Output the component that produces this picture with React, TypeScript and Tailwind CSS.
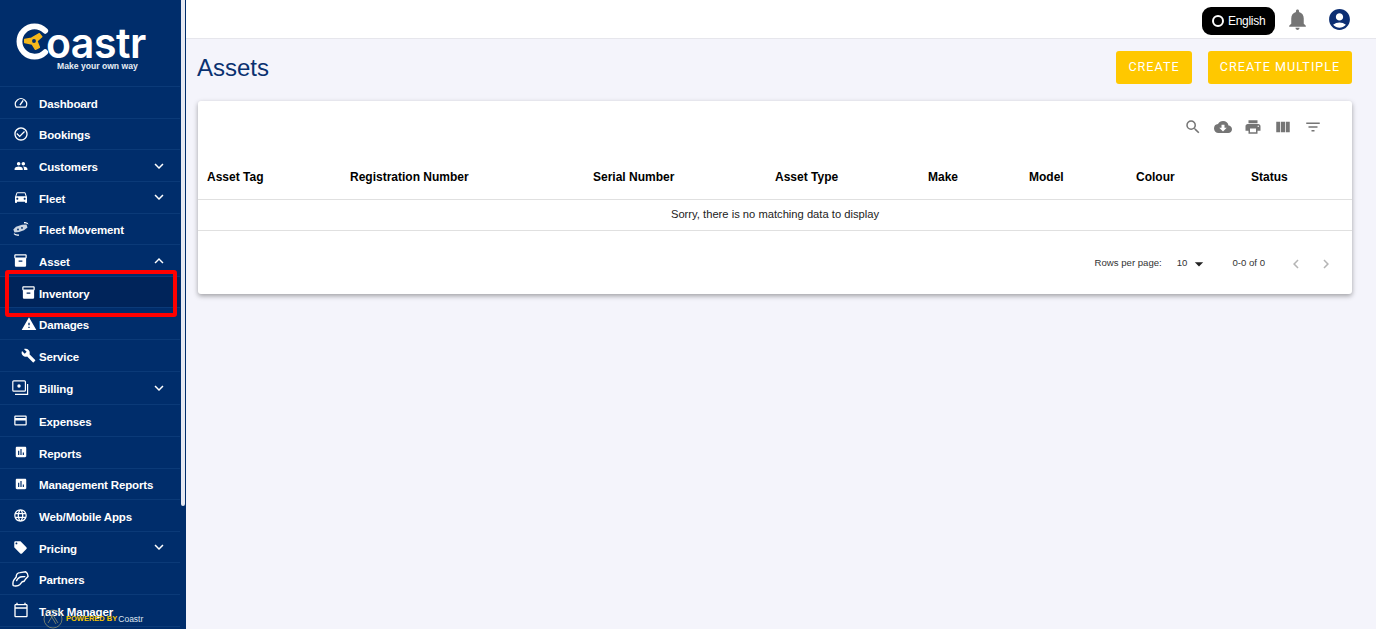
import type { ReactNode } from "react";
import {
  MdAssessment,
  MdBuild,
  MdCheckCircleOutline,
  MdCreditCard,
  MdDirectionsCar,
  MdFilterList,
  MdInventory2,
  MdKeyboardArrowDown,
  MdKeyboardArrowUp,
  MdLanguage,
  MdLocalOffer,
  MdNotifications,
  MdOutlineCalendarToday,
  MdAccountCircle,
  MdCloudDownload,
  MdPrint,
  MdSearch,
  MdViewColumn,
  MdWarning,
  MdChevronLeft,
  MdChevronRight,
  MdArrowDropDown,
  MdPeople,
} from "react-icons/md";

function GaugeIcon() {
  return (
    <svg viewBox="0 0 16 14" className="w-[14px] h-[13px]" fill="none" stroke="white" strokeWidth="1.3">
      <path d="M2.5 12.3 A6.4 6.4 0 1 1 13.5 12.3 Z" strokeLinejoin="round" />
      <path d="M6.8 10 L10.5 4.5" strokeWidth="1.6" />
    </svg>
  );
}

function BillingIcon() {
  return (
    <svg viewBox="0 0 17 16" className="w-[17px] h-[16px]" fill="none" stroke="white" strokeWidth="1.2">
      <rect x="0.8" y="0.8" width="12.6" height="10.4" rx="1" />
      <circle cx="7" cy="6" r="1.7" fill="white" stroke="none" />
      <path d="M15.6 4 V14.4 H3" />
    </svg>
  );
}

function MovementIcon() {
  return (
    <svg viewBox="0 0 16 15" className="w-[16px] h-[16px]" fill="white">
      <path d="M0.3 8 L3 5.2 L9 3.2 L13.5 3 L14.5 6 L11 8.8 L6 10.4 L1.5 11 Z" opacity="0.8" />
      <path d="M11 0.6 Q14.8 0 15.6 3 L14.4 2.4 Q12.5 1.6 11 1.9 Z" />
      <path d="M1.2 11.8 Q3.5 13.5 6 13 L6 14.2 Q2.5 14.8 0.6 12.6 Z" />
      <circle cx="5" cy="8" r="0.9" fill="#002d6b" />
      <circle cx="9" cy="6.4" r="0.9" fill="#002d6b" />
    </svg>
  );
}

function HandshakeIcon() {
  return (
    <svg viewBox="0 0 17 16" className="w-[17px] h-[16px]" fill="none" stroke="white" strokeWidth="1.4" strokeLinejoin="round" strokeLinecap="round">
      <path d="M4.2 6 Q4.2 2 8 1.6 L13.8 0.8 Q16.2 2.4 16 5.6 L13.4 8.2 Q12.8 10.4 10.2 10.8 L8 13.4 Q6 15.2 3.4 15 L1.2 14.6 Q0.4 11.4 1.8 9.2 Z" />
      <path d="M4.6 9.6 Q6.4 6 10 5.8 L12.8 5.6" />
    </svg>
  );
}

function LogoMark() {
  return (
    <svg viewBox="0 0 38 38" className="w-[37px] h-[37px] shrink-0">
      <path d="M31 8 A15.5 15.5 0 1 0 31 30" fill="none" stroke="white" strokeWidth="6" strokeLinecap="round" />
      <path d="M25 11 L27.5 14 L22.5 18.5 L25 25 L21 27 L17.5 21.5 L10 20 L10 17 L17 15.5 Z" fill="#f5b81c" stroke="#f5b81c" strokeWidth="1.5" strokeLinejoin="round" />
      <circle cx="19.5" cy="18.5" r="2" fill="#002d6b" />
    </svg>
  );
}

type Item = {
  label: string;
  icon: ReactNode;
  arrow?: "down" | "up";
  sub?: boolean;
  active?: boolean;
  tall?: boolean;
};

const items: Item[] = [
  { label: "Dashboard", icon: <GaugeIcon /> },
  { label: "Bookings", icon: <MdCheckCircleOutline size={16} /> },
  { label: "Customers", icon: <MdPeople size={14} />, arrow: "down" },
  { label: "Fleet", icon: <MdDirectionsCar size={16} />, arrow: "down" },
  { label: "Fleet Movement", icon: <MovementIcon /> },
  { label: "Asset", icon: <MdInventory2 size={15} />, arrow: "up" },
  { label: "Inventory", icon: <MdInventory2 size={15} />, sub: true, active: true },
  { label: "Damages", icon: <MdWarning size={16} />, sub: true },
  { label: "Service", icon: <MdBuild size={15} />, sub: true },
  { label: "Billing", icon: <BillingIcon />, arrow: "down", tall: true },
  { label: "Expenses", icon: <MdCreditCard size={15} /> },
  { label: "Reports", icon: <MdAssessment size={14} /> },
  { label: "Management Reports", icon: <MdAssessment size={14} /> },
  { label: "Web/Mobile Apps", icon: <MdLanguage size={15} /> },
  { label: "Pricing", icon: <MdLocalOffer size={15} />, arrow: "down" },
  { label: "Partners", icon: <HandshakeIcon /> },
  { label: "Task Manager", icon: <MdOutlineCalendarToday size={16} /> },
];

const columns = ["Asset Tag", "Registration Number", "Serial Number", "Asset Type", "Make", "Model", "Colour", "Status"];

function MenuRow({ item }: { item: Item }) {
  return (
    <div
      className={`flex items-center w-[180px] shrink-0 border-b border-[#0b3a78] text-white ${item.tall ? "h-[33.5px]" : "h-[31.65px]"} ${item.active ? "bg-[#00245a]" : ""}`}
    >
      <div className={`flex justify-center items-center shrink-0 ${item.sub ? "w-[17px] ml-[20px] mr-[2px]" : "w-[17px] ml-[12px] mr-[10px]"}`}>
        {item.icon}
      </div>
      <span className="text-[11.5px] font-bold tracking-[-0.15px] flex-1 whitespace-nowrap pt-[4px]">{item.label}</span>
      {item.arrow === "down" && <MdKeyboardArrowDown size={18} className="mr-[12px]" />}
      {item.arrow === "up" && <MdKeyboardArrowUp size={18} className="mr-[12px]" />}
    </div>
  );
}

export default function App() {
  return (
    <div className="flex h-[629px] w-[1376px] overflow-hidden bg-[#f4f4fb] font-['Liberation_Sans',Arial,sans-serif]">
      <aside className="relative w-[186px] h-full shrink-0 bg-[#002d6b] overflow-hidden">
        <div className="h-[87px] border-b border-[#0b3a78] w-[180px] pt-[22px] pl-[15px]">
          <div className="flex items-center h-[38px]">
            <LogoMark />
            <span className="font-['Inter',sans-serif] text-[41px] font-semibold text-white leading-[30px] ml-[-6px] mt-[3px] tracking-[-0.5px]">oastr</span>
          </div>
          <div className="text-[8.6px] font-bold text-[#e8edf5] ml-[42px] leading-none mt-[2px] whitespace-nowrap">Make your own way</div>
        </div>
        {items.map((item) => (
          <MenuRow key={item.label} item={item} />
        ))}

        {/* scrollbar */}
        <div className="absolute top-0 left-[181px] w-[4px] h-[506px] rounded-b bg-[#e6e9f2]" />

        {/* red highlight from the screenshot */}
        <div className="absolute left-[5px] top-[270px] w-[172px] h-[47px] border-[4px] border-[#ff0000] rounded-[3px]" />

        {/* powered by */}
        <div className="absolute left-[43px] top-[609px] flex items-center">
          <svg viewBox="0 0 20 20" className="w-[20px] h-[20px]" fill="none" stroke="#8a8f70" strokeWidth="0.8">
            <circle cx="10" cy="10" r="9" />
            <path d="M5 14 L10 6 L15 14 M7 5 L13 15" />
          </svg>
          <span className="ml-[3px] text-[7.5px] font-bold text-[#f5c400] whitespace-nowrap">POWERED BY</span>
          <span className="ml-[1px] text-[8.5px] text-[#dfe6f0] whitespace-nowrap">Coastr</span>
        </div>
      </aside>

      <main className="flex-1 flex flex-col min-w-0">
        <header className="h-[39px] shrink-0 bg-white border-b border-[#e6e6ec] flex items-center justify-end">
          <div className="flex items-center h-[28px] w-[73px] mt-[3px] bg-black rounded-[9px] text-white text-[12px] tracking-[-0.3px] pl-[10px] gap-[4px]">
            <span className="w-[12px] h-[12px] rounded-full border-2 border-white" />
            English
          </div>
          <MdNotifications size={25} className="text-[#757575] ml-[10px]" />
          <MdAccountCircle size={25} className="text-[#0d2f73] ml-[17px] mr-[24px]" />
        </header>

        <div className="flex-1 pl-[11px] pr-[24px]">
          <div className="flex items-start justify-between h-[62px] pt-[12px]">
            <h1 className="text-[24px] leading-[33px] text-[#0a3170]">Assets</h1>
            <div className="flex gap-[16px]">
              <button className="h-[33px] w-[76px] rounded-[3px] bg-[#ffc800] text-white text-[12.6px] font-['Roboto',sans-serif] tracking-[1px]">CREATE</button>
              <button className="h-[33px] w-[144px] rounded-[3px] bg-[#ffc800] text-white text-[12.6px] font-['Roboto',sans-serif] tracking-[1px]">CREATE MULTIPLE</button>
            </div>
          </div>

          <div className="ml-[1px] bg-white rounded-[3px] shadow-[0_2px_5px_rgba(0,0,0,0.35)] h-[193px]">
            <div className="h-[51px] flex items-center justify-end gap-[12px] text-[#757575] pr-[30px] pt-[1px]">
              <MdSearch size={18} />
              <MdCloudDownload size={18} />
              <MdPrint size={18} />
              <MdViewColumn size={18} />
              <MdFilterList size={18} />
            </div>
            <div className="grid grid-cols-[143px_243px_182px_153px_101px_107px_115px_1fr] h-[48px] pt-[2px] items-center border-b border-[#e0e0e0] pl-[9px] text-[12px] font-bold text-black">
              {columns.map((c) => (
                <div key={c} className="whitespace-nowrap">{c}</div>
              ))}
            </div>
            <div className="h-[31px] flex items-center justify-center border-b border-[#e0e0e0] text-[11.2px] text-[#222] pb-[1px]">
              Sorry, there is no matching data to display
            </div>
            <div className="h-[63px] flex items-center justify-end text-[9.6px] text-[#333] pr-[17px] pt-[2px]">
              <span>Rows per page:</span>
              <span className="ml-[15px]">10</span>
              <MdArrowDropDown size={20} className="ml-[2px] text-[#222]" />
              <span className="ml-[23px]">0-0 of 0</span>
              <MdChevronLeft size={18} className="ml-[22px] text-[#b5b5b5]" />
              <MdChevronRight size={18} className="ml-[12px] text-[#b5b5b5]" />
            </div>
          </div>
        </div>
      </main>
    </div>
  );
}
